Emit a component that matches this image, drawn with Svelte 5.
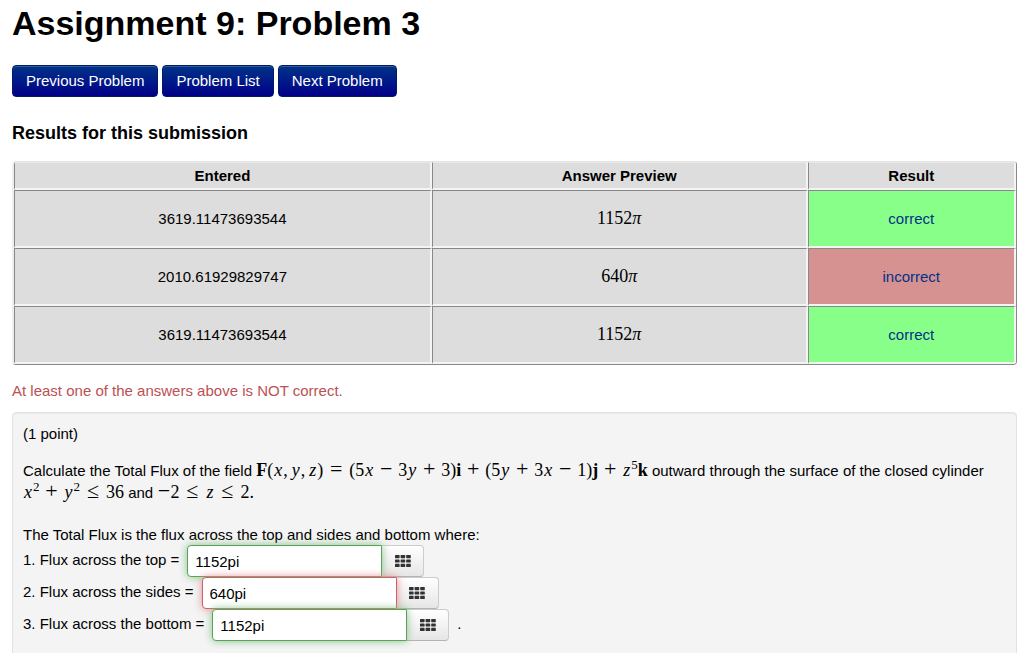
<script>
  const results = [
    { entered: '3619.11473693544', preview: '1152', correct: true },
    { entered: '2010.61929829747', preview: '640', correct: false },
    { entered: '3619.11473693544', preview: '1152', correct: true }
  ]

  let answers = [
    { id: 'top', label: '1. Flux across the top =', value: '1152pi', correct: true },
    { id: 'sides', label: '2. Flux across the sides =', value: '640pi', correct: false },
    { id: 'bottom', label: '3. Flux across the bottom =', value: '1152pi', correct: true, end: '.' }
  ]

  const dots = [0, 1, 2]
</script>

<main>
  <h1>Assignment 9: Problem 3</h1>

  <nav>
    <a class="btn" href="#previous">Previous Problem</a>
    <a class="btn" href="#list">Problem List</a>
    <a class="btn" href="#next">Next Problem</a>
  </nav>

  <h2>Results for this submission</h2>

  <table>
    <thead>
      <tr>
        <th class="entered">Entered</th>
        <th class="preview">Answer Preview</th>
        <th>Result</th>
      </tr>
    </thead>
    <tbody>
      {#each results as row}
        <tr>
          <td>{row.entered}</td>
          <td><span class="math">{row.preview}<i class="pi">π</i></span></td>
          <td class={row.correct ? 'right' : 'wrong'}>
            <a href="#answers">{row.correct ? 'correct' : 'incorrect'}</a>
          </td>
        </tr>
      {/each}
    </tbody>
  </table>

  <p class="message">At least one of the answers above is NOT correct.</p>

  <section class="problem" id="answers">
    <p>(1 point)</p>
    <p class="question">
      Calculate the Total Flux of the field
      <span class="math"><b>F</b>(<i>x</i>,<i class="arg">y</i>,<i class="arg">z</i>)<span class="rel">=</span>(5<i>x</i><span class="op">−</span>3<i>y</i><span class="op">+</span>3)<b>i</b><span class="op">+</span>(5<i>y</i><span class="op">+</span>3<i>x</i><span class="op">−</span>1)<b>j</b><span class="op">+</span><i>z</i><sup>5</sup><b>k</b></span>
      outward through the surface of the closed cylinder
      <span class="math"><i>x</i><sup>2</sup><span class="op">+</span><i>y</i><sup>2</sup><span class="rel">≤</span>36</span>
      and
      <span class="math"><span class="minus">−</span>2<span class="rel">≤</span><i>z</i><span class="rel">≤</span>2.</span>
    </p>
    <p class="where">The Total Flux is the flux across the top and sides and bottom where:</p>

    {#each answers as answer}
      <div class="answer">
        <label for={answer.id}>{answer.label}</label>
        <div class="group">
          <input
            id={answer.id}
            type="text"
            class={answer.correct ? 'ok' : 'bad'}
            bind:value={answer.value}
          />
          <button type="button" aria-label="Open equation editor">
            <svg width="16" height="12" viewBox="0 0 16 12">
              {#each dots as r}
                {#each dots as c}
                  <rect x={c * 5.6} y={r * 4.4} width="4.6" height="3.2" rx="0.6" />
                {/each}
              {/each}
            </svg>
          </button>
        </div>
        {#if answer.end}<span class="end">{answer.end}</span>{/if}
      </div>
    {/each}
  </section>
</main>

<style>
  :global(body) {
    background: #fff;
  }
  main {
    padding: 2px 7px 0 12px;
    font-family: 'Liberation Sans', Arial, sans-serif;
    font-size: 15px;
    line-height: 22px;
    color: #000;
  }
  h1, h2, p {
    margin: 0;
  }
  h1 {
    font-size: 34px;
    line-height: 42px;
  }
  nav {
    display: flex;
    gap: 4px;
    margin-top: 21px;
  }
  .btn {
    padding: 4px 13px;
    border: 1px solid #001a66;
    border-radius: 4px;
    background: linear-gradient(#003388, #000088);
    box-shadow: inset 0 1px 0 rgba(255, 255, 255, 0.2);
    color: #fff;
    text-decoration: none;
  }
  h2 {
    margin-top: 24px;
    font-size: 18px;
    line-height: 24px;
  }
  table {
    width: 100%;
    margin-top: 16px;
    border: 1px solid #888;
    border-top-color: #e4e4e4;
    border-left: 2px solid #eee;
    border-radius: 4px;
    border-spacing: 0;
    table-layout: fixed;
    overflow: hidden;
  }
  th, td {
    box-sizing: border-box;
    padding: 0;
    border-style: solid;
    border-width: 1px 2px 2px 1px;
    border-color: #888 #f4f4f4 #f4f4f4 #888;
    background: #ddd;
    text-align: center;
  }
  th {
    height: 28px;
    border-top-color: #e8e8e8;
  }
  td {
    height: 58px;
  }
  .entered {
    width: 41.7%;
  }
  .preview {
    width: 37.5%;
  }
  .right {
    background: #88ff88;
  }
  .wrong {
    background: #d69191;
  }
  td a {
    color: #003388;
    text-decoration: none;
  }
  .message {
    margin-top: 15px;
    color: #bd5053;
  }
  .problem {
    margin-top: 10px;
    padding: 10px 10px 20px;
    border: 1px solid #e3e3e3;
    border-radius: 4px;
    background: #f4f4f4;
    box-shadow: inset 0 1px 1px rgba(0, 0, 0, 0.05);
  }
  .question {
    margin-top: 15px;
  }
  .where {
    margin-top: 21px;
    line-height: 20px;
  }
  .math {
    font-family: 'Liberation Serif', 'Times New Roman', serif;
    font-size: 18px;
    line-height: 20px;
    white-space: nowrap;
  }
  .math i {
    margin: 0 1px;
  }
  .math .pi {
    margin: 0;
  }
  .math sup {
    font-size: 13px;
    line-height: 0;
    vertical-align: 7px;
  }
  .math .arg {
    margin-left: 4px;
  }
  .op, .rel, .minus {
    display: inline-block;
    font-size: 22px;
    line-height: 16px;
    text-align: center;
  }
  .op {
    width: 24px;
  }
  .rel {
    width: 26px;
  }
  .minus {
    width: 13px;
  }
  .answer {
    display: flex;
    align-items: flex-start;
    gap: 8px;
  }
  .answer label {
    padding-top: 4px;
  }
  .group {
    display: flex;
  }
  input {
    position: relative;
    box-sizing: border-box;
    width: 195px;
    height: 32px;
    padding: 4px 7px;
    border: 1px solid;
    border-radius: 4px 0 0 4px;
    background: #fff;
    color: #000;
    font: inherit;
    outline: none;
  }
  .ok {
    border-color: #55a555;
    box-shadow: 0 0 8px #88c088;
  }
  .bad {
    border-color: #d06065;
    box-shadow: 0 0 8px #e09095;
  }
  button {
    display: flex;
    align-items: center;
    justify-content: center;
    width: 42px;
    height: 32px;
    padding: 0;
    border: 1px solid #ccc;
    border-bottom-color: #b3b3b3;
    border-left: 0;
    border-radius: 0 4px 4px 0;
    background: linear-gradient(#fff, #e6e6e6);
  }
  svg {
    fill: #333;
  }
  .end {
    padding-top: 4px;
  }
</style>
